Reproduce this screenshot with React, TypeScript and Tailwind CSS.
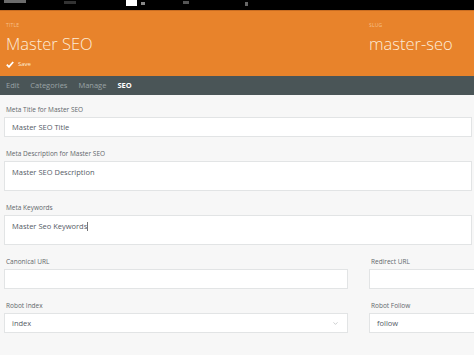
import React from 'react';
import { ChevronDown } from 'lucide-react';

const font = { fontFamily: '"Open Sans", "Noto Sans", sans-serif' };

const Label: React.FC<{ text: string; first?: boolean }> = ({ text, first }) => (
  <div className={`${first ? 'pt-[10px]' : 'pt-[12px]'} pb-[3px] pl-[2px] text-[6.5px] leading-[9px] text-[#62676b]`}>
    {text}
  </div>
);

const TextBox: React.FC<{ value?: string; tall?: boolean; select?: boolean; caret?: boolean }> = ({
  value,
  tall,
  select,
  caret,
}) => (
  <div
    className={`relative w-full bg-white border border-[#e2e4e5] ${tall ? 'h-[30px] pt-[5px]' : 'h-[20px] flex items-center'} px-[7px] text-[7.5px] leading-[10px] text-[#555b66]`}
  >
    <span>{value}</span>
    {caret && <span className="inline-block align-middle w-px h-[9px] bg-[#777] -mt-[1px]" />}
    {select && (
      <ChevronDown className="absolute right-[8px] top-[6px] text-[#8b9094]" size={7} strokeWidth={1.5} />
    )}
  </div>
);

export default function App() {
  return (
    <div className="w-[474px] h-[355px] overflow-hidden bg-[#f7f7f7]" style={font}>
      {/* top system bar */}
      <div className="h-[10px] bg-black flex items-start">
        <div className="ml-[4px] w-[22px] h-[3px] bg-[#6b6b6b]" />
        <div className="ml-[38px] mt-[1px] w-[12px] h-[3px] bg-[#333]" />
        <div className="ml-[50px] w-[11px] h-[6px] bg-white" />
        <div className="ml-[4px] mt-[2px] w-[4px] h-[3px] bg-[#888]" />
        <div className="ml-[38px] mt-[1px] w-[6px] h-[3px] bg-[#555]" />
        <div className="ml-[56px] mt-[2px] w-[3px] h-[4px] bg-[#666]" />
      </div>

      {/* orange header */}
      <div className="h-[66px] bg-[#e8832b] border-t border-[#c96d22] flex px-[6px]">
        <div className="w-[363px] flex flex-col pt-[11px]">
          <div className="text-[5px] leading-[6px] tracking-[0.2px] text-[#f7c08a] uppercase">Title</div>
          <div className="mt-[6px] text-[16.5px] leading-[20px] font-light text-[#fdecd8]">Master SEO</div>
          <div className="mt-[6px] flex items-center gap-[4px] text-[6px] leading-[8px] text-[#fdecd8]">
            <svg width="8" height="7" viewBox="0 0 8 7">
              <path d="M0.8 3.6 L3 5.8 L7.2 1" fill="none" stroke="#fff" strokeWidth="1.8" />
            </svg>
            <span>Save</span>
          </div>
        </div>
        <div className="flex flex-col pt-[11px]">
          <div className="text-[5px] leading-[6px] tracking-[0.2px] text-[#f7c08a] uppercase">Slug</div>
          <div className="mt-[6px] text-[16.5px] leading-[20px] font-light text-[#fdecd8]">master-seo</div>
        </div>
      </div>

      {/* tabs */}
      <div className="h-[19px] bg-[#4a5557] flex items-center px-[6px] gap-[11px] text-[7.5px] text-[#9aa4a6]">
        <span>Edit</span>
        <span>Categories</span>
        <span>Manage</span>
        <span className="font-bold text-white">SEO</span>
      </div>

      {/* form */}
      <div className="pl-[4px] pr-[2px]">
        <Label text="Meta Title for Master SEO" first />
        <TextBox value="Master SEO Title" />
        <Label text="Meta Description for Master SEO" />
        <TextBox value="Master SEO Description" tall />
        <Label text="Meta Keywords" />
        <TextBox value="Master Seo Keywords" tall caret />

        <div className="grid grid-cols-[344px_1fr] gap-x-[21px] -mr-[6px]">
          <div>
            <Label text="Canonical URL" />
            <TextBox />
            <Label text="Robot Index" />
            <TextBox value="index" select />
          </div>
          <div>
            <Label text="Redirect URL" />
            <TextBox />
            <Label text="Robot Follow" />
            <TextBox value="follow" />
          </div>
        </div>
      </div>
    </div>
  );
}
